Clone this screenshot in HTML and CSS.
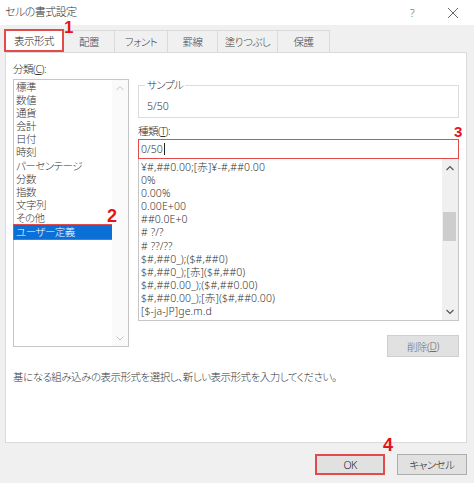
FILE: index.html
```html
<!DOCTYPE html>
<html lang="ja">
<head>
<meta charset="utf-8">
<title>セルの書式設定</title>
<link rel="stylesheet" href="styles.css">
</head>
<body>
<div class="window">
  <div class="titlebar">
    <span class="title">セルの書式設定</span>
    <span class="help">?</span>
    <svg class="close" width="12" height="12" viewBox="0 0 12 12"><path d="M1 1L11 11M11 1L1 11" stroke="#666" stroke-width="1" fill="none"/></svg>
  </div>
  <div class="tabs">
    <div class="tab active">表示形式</div>
    <div class="tab w51">配置</div>
    <div class="tab w53">フォント</div>
    <div class="tab w50">罫線</div>
    <div class="tab w60">塗りつぶし</div>
    <div class="tab w52">保護</div>
  </div>
  <div class="panel">
    <div class="columns">
      <div class="left">
        <div class="label">分類(<u>C</u>):</div>
        <div class="listbox cat">
          <div class="items">
            <div class="item">標準</div>
            <div class="item">数値</div>
            <div class="item">通貨</div>
            <div class="item">会計</div>
            <div class="item">日付</div>
            <div class="item">時刻</div>
            <div class="item">パーセンテージ</div>
            <div class="item">分数</div>
            <div class="item">指数</div>
            <div class="item">文字列</div>
            <div class="item">その他</div>
            <div class="item selected">ユーザー定義</div>
          </div>
          <div class="scroll light">
            <svg class="arrow" width="16" height="16" viewBox="0 0 16 16"><polyline points="4.5,10 8,6.5 11.5,10" stroke="#c4c4c4" fill="none" stroke-width="1"/></svg>
            <div class="track"></div>
            <svg class="arrow" width="16" height="16" viewBox="0 0 16 16"><polyline points="4.5,6.5 8,10 11.5,6.5" stroke="#c4c4c4" fill="none" stroke-width="1"/></svg>
          </div>
        </div>
      </div>
      <div class="right">
        <fieldset class="sample">
          <legend>サンプル</legend>
          <div class="sample-value">5/50</div>
        </fieldset>
        <div class="label type-label">種類(<u>T</u>):</div>
        <div class="input"><span>0/50</span><span class="caret"></span></div>
        <div class="listbox formats">
          <div class="items">
            <div class="item">¥#,##0.00;[赤]¥-#,##0.00</div>
            <div class="item">0%</div>
            <div class="item">0.00%</div>
            <div class="item">0.00E+00</div>
            <div class="item">##0.0E+0</div>
            <div class="item"># ?/?</div>
            <div class="item"># ??/??</div>
            <div class="item">$#,##0_);($#,##0)</div>
            <div class="item">$#,##0_);[赤]($#,##0)</div>
            <div class="item">$#,##0.00_);($#,##0.00)</div>
            <div class="item">$#,##0.00_);[赤]($#,##0.00)</div>
            <div class="item">[$-ja-JP]ge.m.d</div>
          </div>
          <div class="scroll">
            <svg class="arrow" width="16" height="17" viewBox="0 0 16 17"><polyline points="4.5,11 8,7.5 11.5,11" stroke="#555" fill="none" stroke-width="1.2"/></svg>
            <div class="track"><div class="thumb"></div></div>
            <svg class="arrow" width="16" height="17" viewBox="0 0 16 17"><polyline points="4.5,7 8,10.5 11.5,7" stroke="#555" fill="none" stroke-width="1.2"/></svg>
          </div>
        </div>
        <div class="btn-row">
          <div class="button delete">削除(<u>D</u>)</div>
        </div>
      </div>
    </div>
    <div class="desc">基になる組み込みの表示形式を選択し、新しい表示形式を入力してください。</div>
  </div>
  <div class="footer">
    <div class="button ok">OK</div>
    <div class="button">キャンセル</div>
  </div>
  <span class="mark m1">1</span>
  <span class="mark m2">2</span>
  <span class="mark m3">3</span>
  <span class="mark m4">4</span>
</div>
</body>
</html>
```
FILE: styles.css
```css
html, body { margin: 0; padding: 0; }
body { background: #f0f0f0; }
.window {
  position: relative;
  width: 474px;
  height: 483px;
  background: #f0f0f0;
  display: flex;
  flex-direction: column;
  font-family: "Noto Sans", "Noto Sans CJK JP", sans-serif;
  font-size: 10.5px;
  font-weight: 300;
  letter-spacing: -0.5px;
  font-feature-settings: "palt";
  color: #333;
  overflow: hidden;
}
.titlebar {
  height: 25px;
  background: #fff;
  display: flex;
  align-items: center;
  padding-left: 5px;
  box-sizing: border-box;
}
.title { font-size: 11px; color: #333; flex: 1; line-height: 13px; margin-top: -3px; }
.help { font-size: 11px; color: #666; width: 10px; margin-right: 27px; letter-spacing: 0; }
.close { margin-right: 15px; }
.tabs {
  height: 27px;
  display: flex;
  align-items: flex-end;
  padding-left: 4px;
  box-sizing: border-box;
}
.tab {
  height: 22px;
  box-sizing: border-box;
  border-top: 1px solid #dadada;
  border-right: 1px solid #dadada;
  background: #f0f0f0;
  display: flex;
  align-items: center;
  justify-content: center;
  color: #444;
  padding-bottom: 1px;
}
.tab.active {
  width: 60px;
  height: 23px;
  background: #fff;
  border: 2px solid #e34b4b;
  color: #222;
  padding-bottom: 0;
}
.w51 { width: 51px; }
.w53 { width: 53px; }
.w50 { width: 50px; }
.w60 { width: 60px; }
.w52 { width: 52px; }
.panel {
  width: 462px;
  height: 391px;
  margin-left: 5px;
  box-sizing: border-box;
  background: #fff;
  border: 1px solid #dadada;
  padding: 8px 7px 0 7px;
  display: flex;
  flex-direction: column;
}
.columns {
  display: grid;
  grid-template-columns: 116px 1fr;
  column-gap: 9px;
}
.label { line-height: 14px; height: 14px; color: #333; }
.left .label { margin-top: 1px; margin-bottom: 3px; }
.listbox {
  display: flex;
  box-sizing: border-box;
  border: 1px solid #c6c6c6;
  background: #fff;
}
.listbox.cat { height: 268px; }
.items { flex: 1; min-width: 0; padding-top: 1px; }
.item { line-height: 13.1px; height: 13.1px; padding-left: 2px; white-space: nowrap; color: #333; }
.formats .item { letter-spacing: 0.1px; }
.cat .item.selected {
  background: #0a6fd6;
  color: #fff;
  outline: 1.5px solid #e34b4b;
  height: 14px;
  line-height: 14px;
  margin-top: -0.5px;
}
.scroll {
  width: 16px;
  display: flex;
  flex-direction: column;
  background: #f0f0f0;
}
.scroll.light { background: #fafafa; }
.arrow { display: block; flex: none; }
.track { flex: 1; }
.thumb {
  width: 13px;
  height: 29px;
  margin-top: 36px;
  margin-left: 1px;
  background: #cdcdcd;
}
.sample {
  margin: 17px 0 0 0;
  padding: 0 8px 3px 8px;
  border: 1px solid #dcdcdc;
  min-width: 0;
  height: 40px;
  box-sizing: border-box;
}
.sample legend {
  padding: 0 2px;
  margin-left: -2px;
  line-height: 14px;
  color: #333;
}
.sample-value { line-height: 14px; margin-top: 7px; color: #333; letter-spacing: 0; }
.type-label { margin-top: 6px; }
.input {
  margin-top: 1px;
  height: 20px;
  box-sizing: border-box;
  border: 1.5px solid #e34b4b;
  display: flex;
  align-items: center;
  padding-left: 2px;
  color: #333;
  letter-spacing: 0;
}
.caret { width: 1px; height: 12px; background: #222; margin-left: 1px; }
.listbox.formats { height: 162px; border-top: none; }
.formats .items { padding-top: 2px; }
.btn-row { display: flex; justify-content: flex-end; margin-top: 14px; }
.button {
  width: 70px;
  height: 21px;
  box-sizing: border-box;
  background: #e1e1e1;
  border: 1px solid #adadad;
  display: flex;
  align-items: center;
  justify-content: center;
  color: #222;
}
.button.delete { width: 72px; height: 22px; color: #6d6d6d; border-color: #cfcfcf; }
.desc { margin-top: 13px; line-height: 14px; color: #333; }
.footer {
  display: flex;
  justify-content: flex-end;
  gap: 12px;
  padding: 11px 7px 0 0;
}
.button.ok { border: 2px solid #e34b4b; }
.mark {
  position: absolute;
  font-family: "Liberation Sans", Arial, sans-serif;
  font-weight: bold;
  letter-spacing: 0;
  color: #e3131b;
  line-height: 1;
}
.m1 { left: 64px; top: 19px; font-size: 17px; }
.m2 { left: 107px; top: 207px; font-size: 18px; }
.m3 { left: 454px; top: 124px; font-size: 15px; }
.m4 { left: 383px; top: 436px; font-size: 18px; }
```
